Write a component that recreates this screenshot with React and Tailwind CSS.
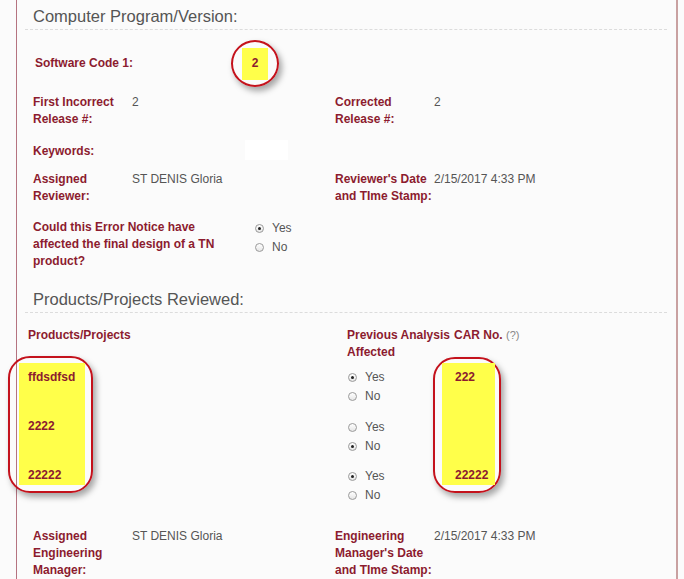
import React from "react";

const label = "font-bold text-[12px] leading-[17px] text-[#8c1b2f]";
const value = "text-[12px] leading-[17px] text-[#555]";

function Radio({ checked, text }) {
  return (
    <div className="flex h-[19px] items-center">
      <span className="flex h-[9px] w-[9px] items-center justify-center rounded-full border border-[#9a9a9a] bg-gradient-to-b from-white to-[#e6e6e6]">
        {checked && <span className="h-[3px] w-[3px] rounded-full bg-[#222]" />}
      </span>
      <span className={`${value} ml-[8px]`}>{text}</span>
    </div>
  );
}

function YesNo({ yes }) {
  return (
    <div>
      <Radio checked={yes} text="Yes" />
      <Radio checked={!yes} text="No" />
    </div>
  );
}

function Heading({ children }) {
  return (
    <div className="ml-[8px] mr-[9px] border-b border-dashed border-[#dcdcdc] pb-[3px] pl-[8px]">
      <h2 className="text-[16.5px] leading-[20px] font-light text-[#555]">
        {children}
      </h2>
    </div>
  );
}

function Field({ name, children }) {
  return (
    <div className="flex items-start">
      <div className={`${label} w-[99px] shrink-0`}>{name}</div>
      <div className={value}>{children}</div>
    </div>
  );
}

function Ring({ className, children }) {
  return (
    <div
      className={`rounded-[22px] border-2 border-[#c4121c] shadow-[3px_4px_6px_rgba(0,0,0,0.35)] ${className}`}
    >
      {children}
    </div>
  );
}

export default function App() {
  const products = ["ffdsdfsd", "2222", "22222"];
  const carNos = ["222", "", "22222"];
  const affected = [true, false, true];

  return (
    <div className="min-h-screen bg-[#fbfbfb] font-['Liberation_Sans',Arial,Helvetica,sans-serif]">
      <div className="ml-[16px] mr-[6px] min-h-[579px] border-l border-r-2 border-l-[#b57380] border-r-[#c9a1a1] pt-[6px]">
        <Heading>Computer Program/Version:</Heading>

        <div className="mt-[10px] flex items-center pl-[18px]">
          <div className={`${label} w-[196px]`}>Software Code 1:</div>
          <div className="flex h-[47px] w-[48px] items-center justify-center rounded-[50%] border-2 border-[#c4121c] shadow-[3px_4px_6px_rgba(0,0,0,0.35)]">
            <div className={`${label} flex h-[32px] w-[26px] items-center justify-center bg-[#ffff4a]`}>
              2
            </div>
          </div>
        </div>

        <div className="mt-[7px] grid grid-cols-[302px_1fr] pl-[16px]">
          <Field name="First Incorrect Release #:">2</Field>
          <Field name="Corrected Release #:">2</Field>
        </div>

        <div className="mt-[12px] flex items-start pl-[16px]">
          <div className={`${label} w-[99px] pt-[3px]`}>Keywords:</div>
          <div className="ml-[113px] h-[20px] w-[43px] bg-white" />
        </div>

        <div className="mt-[11px] grid grid-cols-[302px_1fr] pl-[16px]">
          <Field name="Assigned Reviewer:">ST DENIS Gloria</Field>
          <Field name="Reviewer's Date and TIme Stamp:">2/15/2017 4:33 PM</Field>
        </div>

        <div className="mt-[14px] flex items-start pl-[16px]">
          <div className={`${label} w-[200px]`}>
            Could this Error Notice have affected the final design of a TN
            product?
          </div>
          <div className="ml-[22px]">
            <YesNo yes />
          </div>
        </div>

        <div className="mt-[19px]">
          <Heading>Products/Projects Reviewed:</Heading>
        </div>

        <div className="mt-[14px] flex h-[29px] items-start">
          <div className={`${label} w-[330px] pl-[11px]`}>Products/Projects</div>
          <div className={`${label} w-[107px]`}>Previous Analysis Affected</div>
          <div className={label}>
            CAR No.{" "}
            <span className="text-[11px] font-normal text-[#888]">(?)</span>
          </div>
        </div>

        <div className="flex items-start">
          <div className="w-[330px]">
            <Ring className="-ml-[9px] h-[137px] w-[85px] pl-[9px] pt-[5px]">
              <div className="h-[122px] w-[66px] bg-[#ffff4a] pl-[9px] pt-[6px]">
                {products.map((p) => (
                  <div key={p} className={`${label} h-[49px]`}>
                    {p}
                  </div>
                ))}
              </div>
            </Ring>
          </div>
          <div className="flex w-[107px] flex-col gap-[11.5px] pl-[1px] pt-[12px]">
            {affected.map((a, i) => (
              <YesNo key={i} yes={a} />
            ))}
          </div>
          <div>
            <Ring className="-ml-[21px] mt-[1px] h-[136px] w-[68px] pl-[7px] pt-[4px]">
              <div className="h-[122px] w-[53px] bg-[#ffff4a] pl-[13px] pt-[6px]">
                {carNos.map((c, i) => (
                  <div key={i} className={`${label} h-[49px]`}>
                    {c}
                  </div>
                ))}
              </div>
            </Ring>
          </div>
        </div>

        <div className="mt-[23px] grid grid-cols-[302px_1fr] pl-[16px]">
          <Field name="Assigned Engineering Manager:">ST DENIS Gloria</Field>
          <Field name="Engineering Manager's Date and TIme Stamp:">
            2/15/2017 4:33 PM
          </Field>
        </div>
      </div>
    </div>
  );
}
